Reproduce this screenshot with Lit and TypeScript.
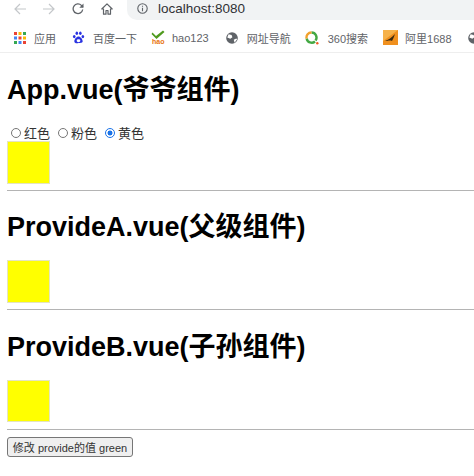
import { LitElement, html, css, svg } from "lit";
import { customElement } from "lit/decorators.js";

const gridColors = ["#ea4335","#fbbc04","#34a853","#4285f4","#ea4335","#fbbc04","#34a853","#4285f4","#ea4335"];

const bookmarks = [
  { label: "应用", w: 12, gap: 8, ml: 0, icon: svg`<svg viewBox="0 0 12 12">${gridColors.map((c, i) => svg`<rect x=${(i % 3) * 4.5} y=${Math.floor(i / 3) * 4.5} width="3" height="3" fill=${c}></rect>`)}</svg>` },
  { label: "百度一下", w: 13, gap: 8, ml: 16, icon: svg`<svg viewBox="0 0 14 14" fill="#2932e1"><ellipse cx="2.400" cy="6" rx="1.400" ry="1.800"/><ellipse cx="5.200" cy="2.500" rx="1.400" ry="1.900"/><ellipse cx="9" cy="2.500" rx="1.400" ry="1.900"/><ellipse cx="11.700" cy="6" rx="1.400" ry="1.800"/><path d="M7 6C5 6 2.500 9 2.500 11c0 2 2 2.500 4.500 2s4.500 0 4.500-2c0-2-2.500-5-4.500-5Z"/><ellipse cx="7" cy="10.500" rx="2" ry="1.600" fill="#fff"/></svg>` },
  { label: "hao123", w: 15, gap: 6, ml: 14, icon: svg`<svg viewBox="0 0 15 15"><path d="M1.500 2.500 5 6l7-5.500 1.500 1.500L5.500 9 0.500 4Z" fill="#4f9a1e"/><text x="1" y="14" font-size="7" font-weight="700" fill="#e8730c" font-family="Liberation Sans">hao</text></svg>` },
  { label: "网址导航", w: 12, gap: 9, ml: 17, icon: svg`<svg viewBox="0 0 14 14"><circle cx="7" cy="7" r="6.800" fill="#5f6368"/><path d="M3 2.500l3.500 1 1 2.500-2.500 2-3.500-1.500ZM9 9l3-1.500 1 1-3 4Z" fill="#fff"/></svg>` },
  { label: "360搜索", w: 14, gap: 9, ml: 14, icon: svg`<svg viewBox="0 0 14 14" fill="none" stroke-width="2.400"><path d="M6.500 1.500a5 5 0 0 1 4 8" stroke="#43a843"/><path d="M10 10.500a5 5 0 0 1-8.300-3" stroke="#43a843"/><path d="M1.600 7.500a5 5 0 0 1 4.900-6" stroke="#f2a12c"/><circle cx="12.300" cy="12.300" r="1.200" fill="#ef5a24" stroke="none"/></svg>` },
  { label: "阿里1688", w: 15, gap: 7, ml: 15, icon: svg`<svg viewBox="0 0 15 15"><rect width="15" height="15" fill="#f0901e"/><path d="M0 0h15L0 11Z" fill="#f6b24a"/><path d="M2 11c3-1 6-3 10-7-1 3-2 5-3 7-2-1-4 0-7 0Z" fill="#3a2a10"/></svg>` },
  { label: "", w: 12, gap: 0, ml: 16, icon: svg`<svg viewBox="0 0 14 14"><circle cx="7" cy="7" r="6.800" fill="#5f6368"/><path d="M3 2.500l3.500 1 1 2.500-2.500 2-3.500-1.500Z" fill="#fff"/></svg>` },
];

@customElement("app-root")
export class AppRoot extends LitElement {
  static styles = css`
    :host { display: block; width: 474px; height: 476px; overflow: hidden; background: #fff; font-family: "Liberation Sans", "Noto Sans CJK SC", Arial, sans-serif; color: #000; }
    .toolbar { height: 30px; display: flex; align-items: flex-start; padding-left: 14px; box-sizing: border-box; }
    .nav { display: flex; gap: 17px; align-items: center; height: 17px; }
    .nav svg { width: 12px; height: 12px; display: block; }
    .omni { margin-left: 14px; flex: 1; height: 20px; background: #f1f3f4; border-radius: 0 0 0 10px; display: flex; align-items: center; padding-left: 10px; gap: 10px; font-size: 13.5px; color: #303134; padding-bottom: 3px; box-sizing: border-box; }
    .omni svg { width: 11px; height: 11px; }
    .bookmarks { height: 23px; box-sizing: border-box; display: flex; align-items: center; padding: 0 0 7px 14px; font-size: 11px; color: #5f6368; white-space: nowrap; overflow: hidden; border-bottom: 1px solid #eee; }
    .bm { display: flex; align-items: center; flex: none; }
    .bm svg { display: block; width: 100%; height: auto; }
    .bm .ic { flex: none; }
    main { padding: 0 0 0 7px; }
    h1 { font-size: 27px; line-height: 32px; font-weight: 700; margin: 0; }
    .first { padding-top: 21px; }
    .radios { display: flex; align-items: center; height: 17px; margin-top: 18px; font-size: 13px; color: #333; padding-left: 4px; }
    .radio { width: 10px; height: 10px; border: 1px solid #767676; border-radius: 50%; box-sizing: border-box; margin-right: 3px; flex: none; }
    .radio.on { border: 1.5px solid #1a73e8; background: radial-gradient(circle, #1a73e8 0 2.300px, #fff 2.700px); }
    .lab { margin-right: 8px; }
    .box { width: 42.5px; height: 42.5px; background: #ffff00; border: 1px solid #e4e4c0; box-sizing: border-box; }
    hr { border: 0; border-top: 1px solid #b4b4b4; height: 0; margin: 6.5px 0 0 0; }
    .section { padding-top: 20.25px; }
    .section .box { margin-top: 17px; }
    button { margin-top: 7.5px; display: block; height: 20px; width: 126px; padding: 0; font: 11px "Liberation Sans", "Noto Sans CJK SC", sans-serif; color: #333; background: #efefef; border: 1px solid #767676; border-radius: 3px; }
  `;

  private nav() {
    return html`<div class="nav">
      <svg viewBox="0 0 12 12" fill="none" stroke="#c4c7ca" stroke-width="1.200"><path d="M12 6H1M6 1 1 6l5 5"/></svg>
      <svg viewBox="0 0 12 12" fill="none" stroke="#c4c7ca" stroke-width="1.200"><path d="M0 6h11M6 1l5 5-5 5"/></svg>
      <svg viewBox="0 0 12 12" fill="none" stroke="#5f6368" stroke-width="1.300"><path d="M10.700 6.500A4.800 4.800 0 1 1 9.400 2.400L11 4"/><path d="M11.500 0.500v4.200H7.300Z" fill="#5f6368" stroke="none"/></svg>
      <svg viewBox="0 0 12 12" fill="none" stroke="#5f6368" stroke-width="1.200"><path d="M6 0.800 0.800 6h1.700v5.200h2.500V7.500h2v3.700h2.500V6h1.700Z" stroke-linejoin="round"/></svg>
    </div>`;
  }

  render() {
    return html`
      <div class="toolbar">
        ${this.nav()}
        <div class="omni">
          <svg viewBox="0 0 14 14" fill="none" stroke="#5f6368" stroke-width="1.400"><circle cx="7" cy="7" r="6"/><path d="M7 6.200v4.200M7 3.500v1.300"/></svg>
          <span>localhost:8080</span>
        </div>
      </div>
      <div class="bookmarks">
        ${bookmarks.map((b) => html`<div class="bm" style="margin-left:${b.ml}px">
          <span class="ic" style="width:${b.w}px;margin-right:${b.gap}px">${b.icon}</span>
          <span>${b.label}</span>
        </div>`)}
      </div>
      <main>
        <h1 class="first">App.vue(爷爷组件)</h1>
        <div class="radios">
          <span class="radio"></span><span class="lab">红色</span>
          <span class="radio"></span><span class="lab">粉色</span>
          <span class="radio on"></span><span class="lab">黄色</span>
        </div>
        <div class="box"></div>
        <hr />
        <div class="section"><h1>ProvideA.vue(父级组件)</h1><div class="box"></div><hr /></div>
        <div class="section"><h1>ProvideB.vue(子孙组件)</h1><div class="box"></div><hr /></div>
        <button>修改 provide的值 green</button>
      </main>
    `;
  }
}
